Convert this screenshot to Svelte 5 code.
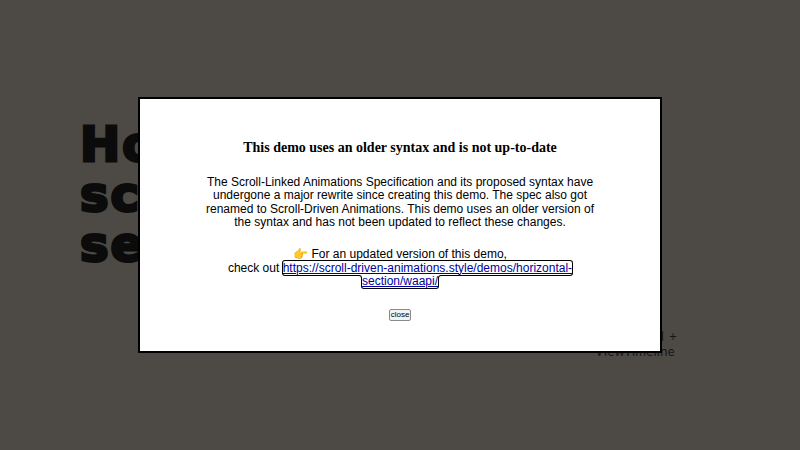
<script>
  let open = $state(true);
</script>

<main class="page">
  <section class="hero">
    <h1>Horizontal<br />scroll<br />section</h1>
    <p class="note"><span class="first">WAAPI +</span><br />ViewTimeline</p>
  </section>
</main>

{#if open}
  <div class="backdrop">
    <div class="dialog" role="dialog">
      <h2>This demo uses an older syntax and is not up-to-date</h2>
      <p class="body">The Scroll-Linked Animations Specification and its proposed syntax have undergone a major rewrite since creating this demo. The spec also got renamed to Scroll-Driven Animations. This demo uses an older version of the syntax and has not been updated to reflect these changes.</p>
      <p class="update">👉 For an updated version of this demo,<br />check out <a href="#top" class="link">https://scroll-driven-animations.style/demos/horizontal-section/waapi/</a></p>
      <button type="button" onclick={() => (open = false)}>close</button>
    </div>
  </div>
{/if}

<style>
  :global(body) {
    margin: 0;
    background: #4d4a45;
    overflow: hidden;
  }
  .page {
    height: 450px;
    box-sizing: border-box;
    padding: 0 125px 0 80px;
    font-family: "Lato", "Liberation Sans", sans-serif;
    color: #0b0b0b;
    overflow: hidden;
  }
  .hero {
    height: 100%;
    display: flex;
    flex-direction: column;
    justify-content: space-between;
    box-sizing: border-box;
    padding: 119px 0 91px;
  }
  h1 {
    margin: 0;
    font-family: "DejaVu Sans", "Liberation Sans", sans-serif;
    font-weight: 700;
    font-size: 48px;
    line-height: 50px;
    letter-spacing: 2px;
    -webkit-text-stroke: 3px #0b0b0b;
  }
  .note {
    margin: 0;
    align-self: flex-end;
    font-size: 13px;
    line-height: 15px;
    letter-spacing: 0.3px;
    text-align: right;
    color: #171716;
  }
  .first {
    display: inline-block;
    margin-right: -2px;
    word-spacing: 1px;
  }
  .backdrop {
    position: fixed;
    inset: 0;
    display: flex;
    align-items: flex-start;
    justify-content: center;
  }
  .dialog {
    box-sizing: border-box;
    width: 524px;
    height: 255.5px;
    margin-top: 97px;
    padding: 40.5px 66px 0;
    background: #fff;
    border: 2.25px solid #000;
    text-align: center;
    font-family: "Liberation Sans", Arial, sans-serif;
    font-size: 12px;
    line-height: 13.5px;
    color: #000;
  }
  h2 {
    margin: 0;
    font-family: "Liberation Serif", "Times New Roman", serif;
    font-size: 14px;
    line-height: 16px;
    font-weight: 700;
  }
  .body {
    margin: 20px 0 0;
  }
  .update {
    margin: 18.5px 0 0;
  }
  .link {
    color: #00009e;
    outline: 1.5px solid #000;
    border-radius: 2px;
  }
  button {
    display: block;
    margin: 20px auto 0;
    padding: 0 1px;
    font-family: "Liberation Sans", Arial, sans-serif;
    font-size: 8px;
    line-height: 10px;
    color: #000;
    background: #f2f2f2;
    border: 1px solid #8a8a8a;
    border-radius: 2px;
  }
</style>
